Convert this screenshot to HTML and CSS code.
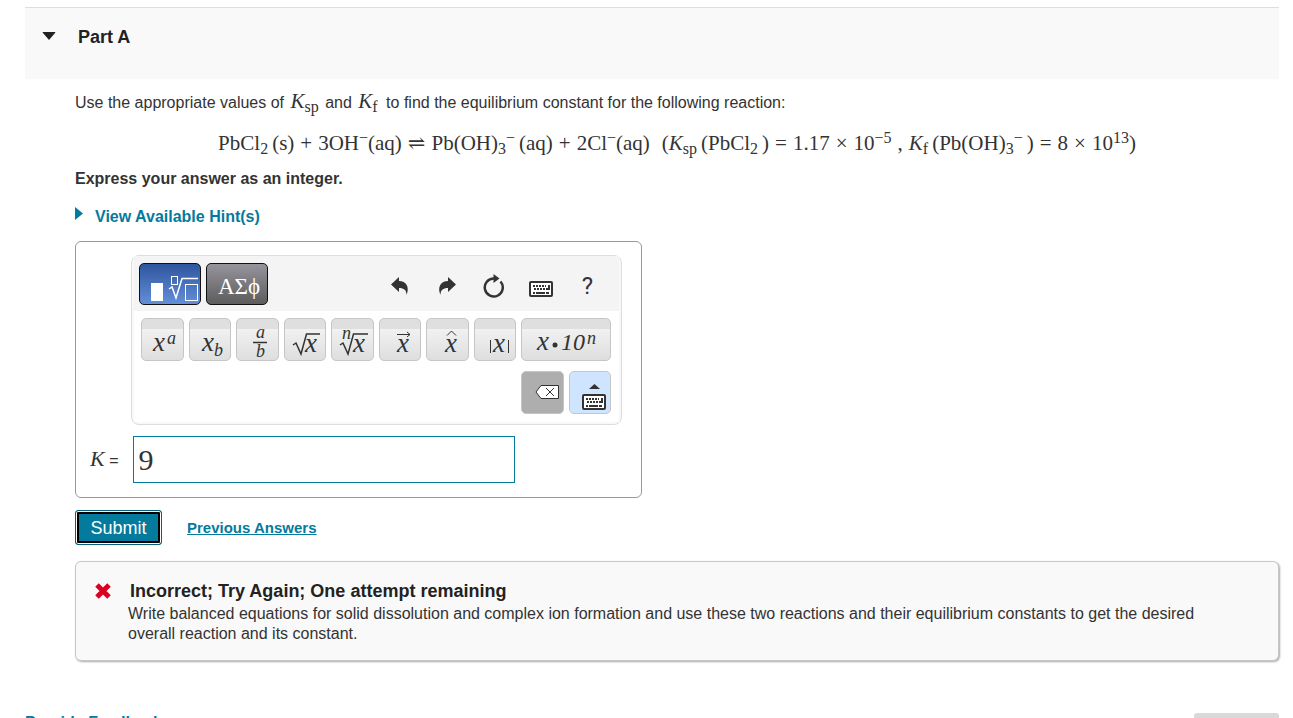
FILE: index.html
```html
<!DOCTYPE html>
<html lang="en">
<head>
  <meta charset="UTF-8">
  <meta name="viewport" content="width=device-width, initial-scale=1.0">
  <title>Part A</title>
  <link rel="stylesheet" href="styles.css">
</head>
<body>
  <svg class="defs" aria-hidden="true">
    <symbol id="keyboard" viewBox="0 0 24 16">
      <rect x="1" y="1" width="22" height="14" rx="1" fill="#fff" stroke="#333" stroke-width="2"/>
      <path d="M4 5h13M5 8h11" stroke="#333" stroke-width="2" stroke-dasharray="2 1"/>
      <path d="M20 4v4h-3M4 12h2M7 12h9M17 12h3" fill="none" stroke="#333" stroke-width="2"/>
    </symbol>
  </svg>

  <main class="page">
    <header class="part-header">
      <button class="toggle" aria-label="Collapse part" aria-expanded="true"><svg width="14" height="8"><path d="M1 0h12q1 0 0 1L7 8 1 1Q0 0 1 0z" fill="#222"/></svg></button>
      <h1>Part A</h1>
    </header>

    <div class="content">
      <p class="question">Use the appropriate values of <span class="math term"><i>K</i><sub>sp</sub></span> and <span class="math term kf"><i>K</i><sub>f</sub></span> to find the equilibrium constant for the following reaction:</p>

      <p class="math equation">
        <span>PbCl<sub>2</sub></span><span class="thin">(s)</span><span class="op">+</span><span>3OH<sup>−</sup>(aq)</span><span class="op">⇌</span><span>Pb(OH)<sub>3</sub></span><sup class="charge">−</sup><span class="thin">(aq)</span><span class="op">+</span><span>2Cl<sup>−</sup>(aq)</span><span class="group">(<i>K</i><sub>sp</sub></span><span class="thin">(PbCl<sub>2</sub></span><span class="thin">)</span><span class="op">=</span><span>1.17</span><span class="op">×</span><span>10<sup>−5</sup></span><span class="comma">,</span><span><i>K</i><sub>f</sub></span><span class="thin">(Pb(OH)<sub>3</sub></span><sup class="charge">−</sup><span class="thin">)</span><span class="op">=</span><span>8</span><span class="op">×</span><span>10<sup>13</sup>)</span>
      </p>

      <p class="instruction">Express your answer as an integer.</p>

      <a class="hints" href="#hints"><svg width="8" height="13"><path d="M0 0l8 6.500-8 6.500z" fill="#047a9c"/></svg>View Available Hint(s)</a>

      <form class="answer">
        <div class="palette">
          <div class="toolbar">
            <button type="button" class="tab active" aria-label="Templates">
              <svg width="60" height="40" fill="none" stroke="#fff">
                <rect x="11" y="19" width="12" height="18" fill="#fff" stroke="none"/>
                <rect x="31.500" y="12.500" width="6" height="8"/>
                <path d="M29 25l3-2 4 11 6-19.500h16" stroke-width="1.500"/>
                <rect x="45.500" y="20.500" width="12" height="16"/>
              </svg>
            </button>
            <button type="button" class="tab" aria-label="Symbols">
              <svg width="60" height="40"><text x="11" y="30" fill="#fff" font-size="23">ΑΣϕ</text></svg>
            </button>
            <div class="tools">
              <button type="button" aria-label="Undo"><svg width="20" height="20"><path d="M1 8.500L9 1v4c7 0 11 6 7.500 14 0-5-2.500-7-7.500-7v4z" fill="#333"/></svg></button>
              <button type="button" aria-label="Redo"><svg width="20" height="20"><path d="M19 8.500L11 1v4C4 5 0 11 3.500 19c0-5 2.500-7 7.500-7v4z" fill="#333"/></svg></button>
              <button type="button" aria-label="Reset"><svg width="22" height="24"><path d="M17.500 7.500A9 9 0 1 1 11 4.500" fill="none" stroke="#333" stroke-width="2.500"/><path d="M10.500 0l6 4.500-6 4.500z" fill="#333"/></svg></button>
              <button type="button" class="low" aria-label="Keyboard shortcuts"><svg width="24" height="16"><use href="#keyboard"/></svg></button>
              <button type="button">?</button>
            </div>
          </div>
          <div class="keys">
            <button type="button" class="key" aria-label="Superscript"><svg width="40" height="41"><text x="11" y="32">x</text><text class="small" x="25" y="25">a</text></svg></button>
            <button type="button" class="key" aria-label="Subscript"><svg width="40" height="41"><text x="12" y="32">x</text><text class="small" x="24" y="37">b</text></svg></button>
            <button type="button" class="key" aria-label="Fraction"><svg width="40" height="41"><text class="small" x="19" y="19">a</text><path d="M16 23.500h14"/><text class="small" x="19" y="38">b</text></svg></button>
            <button type="button" class="key" aria-label="Square root"><svg width="40" height="41"><path d="M8 26l3-2 5 11 5.500-20H35"/><text x="20" y="33">x</text></svg></button>
            <button type="button" class="key" aria-label="Nth root"><svg width="40" height="41"><text class="small" x="10" y="20">n</text><path d="M8 26l3-2 5 11 5.500-20H36"/><text x="21" y="33">x</text></svg></button>
            <button type="button" class="key" aria-label="Vector"><svg width="40" height="41"><path class="fine" d="M17 15.500h13M27 13l3 2.500-3 2.500"/><text x="17" y="33">x</text></svg></button>
            <button type="button" class="key" aria-label="Unit vector"><svg width="40" height="41"><path class="fine" d="M20 16.500l4.500-4.500 4.500 4.500"/><text x="18" y="33">x</text></svg></button>
            <button type="button" class="key" aria-label="Absolute value"><svg width="40" height="41"><path class="fine" d="M15.500 21v13M33.500 21v13"/><text x="18" y="33">x</text></svg></button>
            <button type="button" class="key wide" aria-label="Scientific notation"><svg width="88" height="41"><text x="15" y="31">x</text><circle cx="33" cy="26" r="2.500"/><text class="digits" x="39" y="31">10</text><text class="small" x="65" y="25">n</text></svg></button>
            <button type="button" class="key delete" aria-label="Delete"><svg width="40" height="41"><path class="fine" d="M14 20l5-6.500h17.500v13H19z" fill="#fff"/><path class="fine" d="M24 16l8 8M32 16l-8 8"/></svg></button>
            <button type="button" class="key hide" aria-label="Hide keypad"><svg width="40" height="41"><path d="M19 17l5.500-5 5.500 5z"/><use href="#keyboard" x="12" y="22" width="24" height="16"/></svg></button>
          </div>
        </div>
        <div class="entry">
          <label for="k"><i>K</i> =</label>
          <input id="k" type="text" value="9">
        </div>
      </form>

      <div class="actions">
        <button class="submit">Submit</button>
        <a class="previous" href="#previous">Previous Answers</a>
      </div>

      <section class="feedback">
        <svg width="18" height="18"><path d="M3 3l12 12M15 3L3 15" stroke="#dc0020" stroke-width="5"/></svg>
        <div>
          <h2>Incorrect; Try Again; One attempt remaining</h2>
          <p>Write balanced equations for solid dissolution and complex ion formation and use these two reactions and their equilibrium constants to get the desired overall reaction and its constant.</p>
        </div>
      </section>
    </div>

    <footer class="page-footer">
      <a href="#feedback">Provide Feedback</a>
      <button class="next" disabled>Next</button>
    </footer>
  </main>
</body>
</html>
```
FILE: styles.css
```css
* {
  box-sizing: border-box;
}
body {
  margin: 0;
  font: 16px/20px "Liberation Sans", Arial, sans-serif;
  color: #333;
  background: #fff;
}
h1, h2, p {
  margin: 0;
}
button {
  font: inherit;
  padding: 0;
  border: none;
  background: none;
  cursor: pointer;
}
a {
  color: #047a9c;
  font-weight: bold;
}
svg {
  display: block;
  flex: none;
}
.defs {
  position: absolute;
  width: 0;
  height: 0;
}
.page {
  padding: 7px 14px 0 25px;
}
.part-header {
  display: flex;
  align-items: flex-start;
  gap: 22px;
  height: 72px;
  padding: 19px 17px;
  border-top: 1px solid #ddd;
  background: #f9f9f9;
}
.toggle {
  padding: 5px 0;
}
.part-header h1 {
  font-size: 18px;
  line-height: 20px;
  color: #222;
}
.content {
  display: flex;
  flex-direction: column;
  align-items: flex-start;
  padding-left: 50px;
}
.math {
  font-family: "Liberation Serif", "DejaVu Serif", serif;
  font-size: 21px;
}
.math sub, .math sup {
  font-size: 16px;
  line-height: 0;
}
.math sub {
  vertical-align: -4px;
}
.math sup {
  vertical-align: 7px;
}
.term {
  margin: 0 2px;
}
.kf {
  margin-right: 4px;
}
.question {
  margin-top: 12px;
}
.equation {
  display: flex;
  align-items: baseline;
  align-self: center;
  height: 24px;
  line-height: 24px;
  margin-top: 18px;
  white-space: nowrap;
}
.equation .op {
  margin: 0 6px;
}
.equation .thin {
  margin-left: 4px;
}
.equation .group {
  margin-left: 12px;
}
.equation .comma {
  margin: 0 6px;
}
.equation .charge {
  align-self: flex-start;
  line-height: 14px;
}
.instruction {
  margin-top: 14px;
  font-weight: bold;
}
.hints {
  display: flex;
  gap: 12px;
  margin-top: 18px;
  text-decoration: none;
}
.answer {
  width: 567px;
  max-width: 100%;
  margin-top: 14px;
  padding: 13px 19px 14px 14px;
  border: 1px solid #999;
  border-radius: 6px;
}
.palette {
  margin-left: 41px;
  padding: 0 2px 2px;
  border: 1px solid #ddd;
  border-radius: 8px;
  background: #f8f8f8;
}
.toolbar {
  display: flex;
  gap: 5px;
  padding: 7px 8px 6px 5px;
  background: #f4f4f4;
}
.tab {
  width: 62px;
  height: 42px;
  border: 1px solid #111;
  border-radius: 5px;
  background: linear-gradient(#96949d, #5c5c5c);
  font-family: "Liberation Serif", serif;
}
.tab.active {
  background: linear-gradient(#2e569f, #638fd8);
}
.tools {
  display: flex;
  margin-left: auto;
}
.tools button {
  display: flex;
  align-items: center;
  justify-content: center;
  width: 47px;
  padding-top: 4px;
  font: 24px/24px Roboto, sans-serif;
  color: #333;
}
.tools .low {
  padding-top: 10px;
}
.keys {
  display: grid;
  grid-template-columns: repeat(10, 1fr);
  gap: 10px 5px;
  padding: 7px 8px 8px 7px;
  background: #fff;
}
.key {
  height: 43px;
  overflow: hidden;
  border: 1px solid #c6c6c6;
  border-radius: 5px;
  background: linear-gradient(#dfdfdf 10px, #f1f1f1 10px, #dedede);
}
.key.wide {
  grid-column: span 2;
}
.key.delete {
  grid-column: 9;
  background: #aeaeae;
}
.key.hide {
  background: #cfe4ff;
}
.key text {
  font: italic 27px "Liberation Serif", serif;
  fill: #333;
}
.key .small {
  font-size: 18px;
}
.key .digits {
  font-size: 24px;
}
.key circle {
  fill: #333;
}
.key path {
  fill: none;
  stroke: #333;
  stroke-width: 1.5;
}
.key path.fine {
  stroke-width: 1;
}
.key.delete path[fill] {
  fill: #fff;
}
.key.hide > svg > path {
  fill: #333;
  stroke: none;
}
.entry {
  display: flex;
  align-items: center;
  gap: 15px;
  margin-top: 11px;
}
.entry label {
  white-space: nowrap;
}
.entry i {
  font-family: "Liberation Serif", serif;
  font-size: 22px;
}
.entry input {
  width: 382px;
  height: 47px;
  padding: 0 4px;
  border: 1px solid #047a9c;
  border-radius: 0;
  font: 30px "Liberation Serif", serif;
  color: #333;
}
.actions {
  display: flex;
  align-items: center;
  gap: 25px;
  margin-top: 12px;
}
.submit {
  width: 87px;
  height: 35px;
  border: 1px solid #05607a;
  border-radius: 3px;
  box-shadow: inset 0 0 0 1px #fff, inset 0 0 0 3px #000;
  background: #047a9c;
  font-size: 18px;
  color: #fff;
}
.previous {
  font-size: 15px;
}
.feedback {
  display: flex;
  align-self: stretch;
  gap: 16px;
  min-height: 100px;
  margin-top: 16px;
  padding: 19px 50px 16px 18px;
  border: 1px solid #c7c7c7;
  border-radius: 6px;
  box-shadow: 1px 1px 2px #aaa;
  background: #f9f9f9;
}
.feedback > svg {
  margin-top: 1px;
}
.feedback h2 {
  margin: 0 0 3px 2px;
  font-size: 18px;
  line-height: 20px;
  color: #222;
}
.page-footer {
  display: flex;
  justify-content: space-between;
  align-items: flex-start;
  margin-top: 52px;
}
.page-footer a {
  text-decoration: none;
}
.next {
  width: 85px;
  height: 34px;
  border-radius: 3px;
  background: #d9d9d9;
  color: #fff;
}
```
